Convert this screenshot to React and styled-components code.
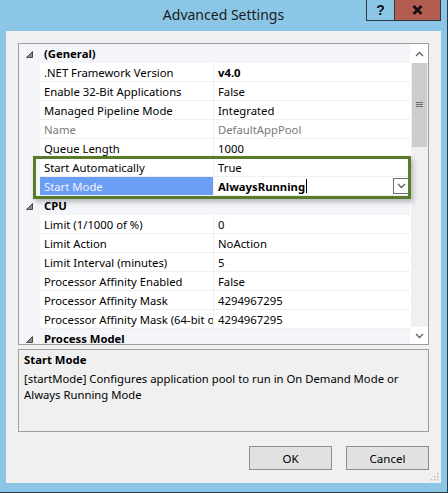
import React from "react";
import styled, { createGlobalStyle } from "styled-components";

const GlobalStyle = createGlobalStyle`
  html, body {
    margin: 0;
    padding: 0;
    background: #ffffff;
  }
  body {
    font-family: "Noto Sans", "Open Sans", sans-serif;
  }
`;

const FONT = `"Noto Sans", "Open Sans", "Liberation Sans", sans-serif`;

const Window = styled.div`
  width: 448px;
  height: 493px;
  box-sizing: border-box;
  background: #8cc6e6;
  border-right: 1px solid #2f3a40;
  border-bottom: 1px solid #2f3a40;
  display: flex;
  flex-direction: column;
  padding: 0 6px 9px 6px;
  font-family: ${FONT};
  color: #000;
`;

const TitleBar = styled.div`
  height: 31px;
  display: grid;
  grid-template-columns: 1fr auto 1fr;
  align-items: start;
`;

const Title = styled.div`
  grid-column: 2;
  font-size: 14px;
  line-height: 30px;
  color: #1b1b1b;
`;

const Caption = styled.div`
  grid-column: 3;
  justify-self: end;
  display: flex;
`;

const CaptionButton = styled.div`
  width: ${(p) => p.$w}px;
  height: 21px;
  box-sizing: border-box;
  border: 1px solid #2e3a42;
  border-top: none;
  margin-left: -1px;
  background: ${(p) => (p.$close ? "#b25c52" : "#8cc6e6")};
  display: flex;
  align-items: center;
  justify-content: center;
  font-family: "Liberation Sans", sans-serif;
  font-weight: 700;
  font-size: 14px;
  color: #111;
`;

const Client = styled.div`
  flex: 1;
  background: #f0f0f0;
  display: flex;
  flex-direction: column;
  padding: 12px 12px 13px 12px;
  position: relative;
`;

const Grid = styled.div`
  height: 302px;
  box-sizing: border-box;
  border: 1px solid #9a9ea4;
  background: #ffffff;
  display: flex;
  position: relative;
`;

const Rows = styled.div`
  flex: 1;
  overflow: hidden;
  display: flex;
  flex-direction: column;
`;

const CategoryRow = styled.div`
  height: 19px;
  flex: none;
  display: flex;
  align-items: center;
  background: #f4f5f9;
  font-size: 11.3px;
  font-weight: 700;
`;

const Expander = styled.div`
  width: 21px;
  display: flex;
  justify-content: center;
  align-items: center;
  padding-top: 1px;
`;

const CategoryLabel = styled.span`
  padding-left: 4px;
`;

const PropRow = styled.div`
  height: 19px;
  flex: none;
  display: grid;
  grid-template-columns: 21px 174px 1fr;
  font-size: 11.3px;
`;

const Gutter = styled.div`
  background: #f4f5f9;
`;

const Cell = styled.div`
  box-sizing: border-box;
  border-bottom: 1px solid #efeff2;
  border-right: ${(p) => (p.$name ? "1px solid #efeff2" : "none")};
  padding-left: 4px;
  display: flex;
  align-items: center;
  white-space: nowrap;
  overflow: hidden;
  position: relative;
  background: ${(p) => (p.$selected ? "#6c9df5" : "transparent")};
  color: ${(p) => (p.$selected ? "#eef3fe" : p.$muted ? "#7a7a7a" : "#000")};
  font-weight: ${(p) => (p.$bold ? 700 : 400)};
`;

const Caret = styled.span`
  width: 1px;
  height: 14px;
  background: #000;
  margin-left: 1px;
`;

const DropButton = styled.div`
  position: absolute;
  right: 1px;
  top: 1px;
  width: 16px;
  height: 16px;
  box-sizing: border-box;
  border: 1px solid #707070;
  background: #fff;
  display: flex;
  align-items: center;
  justify-content: center;
`;

const Highlight = styled.div`
  position: absolute;
  left: 14px;
  top: 112px;
  width: 378px;
  height: 43px;
  box-sizing: border-box;
  border: 3px solid #5b7b2c;
  box-shadow: 2px 3px 5px rgba(0, 0, 0, 0.25);
  pointer-events: none;
`;

const ScrollBar = styled.div`
  width: 17px;
  flex: none;
  display: flex;
  flex-direction: column;
  background: #f0f0f0;
  border-left: 1px solid #ffffff;
`;

const ScrollArrow = styled.div`
  height: ${(p) => p.$h}px;
  flex: none;
  background: #fff;
  display: flex;
  align-items: center;
  justify-content: center;
`;

const Thumb = styled.div`
  height: 84px;
  flex: none;
  background: #cdcdcd;
  margin: 0 1px;
  display: flex;
  align-items: center;
  justify-content: center;
`;

const Track = styled.div`
  flex: 1;
`;

const Description = styled.div`
  margin-top: 4px;
  height: 83px;
  box-sizing: border-box;
  border: 1px solid #a0a0a0;
  background: #f0f0f0;
  padding: 2px 5px;
  font-size: 11.3px;
  line-height: 16px;
`;

const DescTitle = styled.div`
  font-weight: 700;
  margin-bottom: 3px;
`;

const Buttons = styled.div`
  margin-top: 14px;
  display: flex;
  justify-content: flex-end;
  gap: 14px;
`;

const Button = styled.button`
  width: 83px;
  height: 24px;
  box-sizing: border-box;
  border: 1px solid #8f8f8f;
  background: #e1e1e1;
  font-family: ${FONT};
  font-size: 11.5px;
  color: #000;
  padding: 0;
`;

const Grip = styled.div`
  position: absolute;
  right: 2px;
  bottom: 2px;
  display: flex;
`;

const Triangle = () => (
  <svg width="7" height="7" viewBox="0 0 7 7">
    <polygon points="6.5,0.5 6.5,6.5 0.5,6.5" fill="#8a8a8a" stroke="#4a4a4a" strokeWidth="1" />
  </svg>
);

const Chevron = ({ up }) => (
  <svg width="9" height="6" viewBox="0 0 9 6">
    <polyline
      points={up ? "1,5 4.5,1.5 8,5" : "1,1 4.5,4.5 8,1"}
      fill="none"
      stroke="#606060"
      strokeWidth="1.3"
    />
  </svg>
);

const general = [
  { name: ".NET Framework Version", value: "v4.0", bold: true },
  { name: "Enable 32-Bit Applications", value: "False" },
  { name: "Managed Pipeline Mode", value: "Integrated" },
  { name: "Name", value: "DefaultAppPool", muted: true },
  { name: "Queue Length", value: "1000" },
  { name: "Start Automatically", value: "True" },
  { name: "Start Mode", value: "AlwaysRunning", selected: true },
];

const cpu = [
  { name: "Limit (1/1000 of %)", value: "0" },
  { name: "Limit Action", value: "NoAction" },
  { name: "Limit Interval (minutes)", value: "5" },
  { name: "Processor Affinity Enabled", value: "False" },
  { name: "Processor Affinity Mask", value: "4294967295" },
  { name: "Processor Affinity Mask (64-bit option)", value: "4294967295" },
];

const Category = ({ label }) => (
  <CategoryRow>
    <Expander>
      <Triangle />
    </Expander>
    <CategoryLabel>{label}</CategoryLabel>
  </CategoryRow>
);

const Property = ({ item }) => (
  <PropRow>
    <Gutter />
    <Cell $name $selected={item.selected} $muted={item.muted}>
      {item.name}
    </Cell>
    <Cell $bold={item.bold || item.selected} $muted={item.muted}>
      {item.value}
      {item.selected && <Caret />}
      {item.selected && (
        <DropButton>
          <Chevron />
        </DropButton>
      )}
    </Cell>
  </PropRow>
);

export default function App() {
  return (
    <>
      <GlobalStyle />
      <Window>
        <TitleBar>
          <Title>Advanced Settings</Title>
          <Caption>
            <CaptionButton $w={29}>?</CaptionButton>
            <CaptionButton $w={47} $close>
              <svg width="11" height="10" viewBox="0 0 11 10">
                <path d="M1.5 1 L9.5 9 M9.5 1 L1.5 9" stroke="#111" strokeWidth="2.6" />
              </svg>
            </CaptionButton>
          </Caption>
        </TitleBar>
        <Client>
          <Grid>
            <Rows>
              <Category label="(General)" />
              {general.map((item) => (
                <Property key={item.name} item={item} />
              ))}
              <Category label="CPU" />
              {cpu.map((item) => (
                <Property key={item.name} item={item} />
              ))}
              <Category label="Process Model" />
            </Rows>
            <ScrollBar>
              <ScrollArrow $h={19}>
                <Chevron up />
              </ScrollArrow>
              <Thumb>
                <svg width="7" height="6" viewBox="0 0 7 6">
                  <path d="M0 0.5 H7 M0 2.5 H7 M0 4.5 H7" stroke="#6a6a6a" strokeWidth="1" />
                </svg>
              </Thumb>
              <Track />
              <ScrollArrow $h={17}>
                <Chevron />
              </ScrollArrow>
            </ScrollBar>
            <Highlight />
          </Grid>
          <Description>
            <DescTitle>Start Mode</DescTitle>
            [startMode] Configures application pool to run in On Demand Mode or
            <br />
            Always Running Mode
          </Description>
          <Buttons>
            <Button>OK</Button>
            <Button>Cancel</Button>
          </Buttons>
          <Grip>
            <svg width="9" height="9" viewBox="0 0 9 9">
              {[
                [7, 1],
                [7, 4],
                [7, 7],
                [4, 4],
                [4, 7],
                [1, 7],
              ].map(([x, y]) => (
                <rect key={`${x}-${y}`} x={x} y={y} width="1.5" height="1.5" fill="#b8b8b8" />
              ))}
            </svg>
          </Grip>
        </Client>
      </Window>
    </>
  );
}
